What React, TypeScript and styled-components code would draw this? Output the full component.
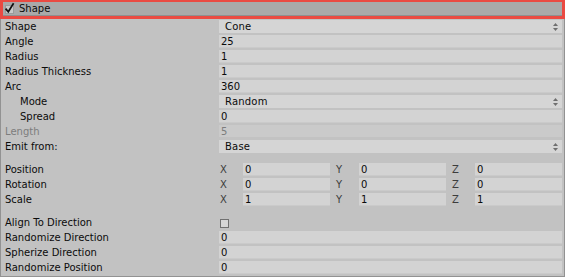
import React from "react";
import styled, { createGlobalStyle } from "styled-components";

const GlobalStyle = createGlobalStyle`
  html, body { margin: 0; padding: 0; background: #c2c2c2; }
  body { font-family: "DejaVu Sans", Verdana, sans-serif; font-size: 10px; color: #0b0b0b; }
  * { box-sizing: border-box; }
`;

const Panel = styled.div`
  width: 565px;
  height: 277px;
  display: flex;
  flex-direction: column;
  background: #c2c2c2;
`;

const Header = styled.div`
  height: 19px;
  border-style: solid;
  border-color: #ea4a42;
  border-width: 2px 3px 3px 3px;
  background: #a9a9a9;
  box-shadow: inset 0 -1px 0 #8f8f8f;
  display: flex;
  align-items: flex-start;
  padding-left: 1px;
  gap: 4px;
`;

const HeaderTitle = styled.span`
  line-height: 13px;
  color: #0a0a0a;
`;

const CheckIcon = styled.svg`
  width: 11px;
  height: 12px;
  flex: none;
  margin-top: 0px;
`;

const Body = styled.div`
  flex: 1;
  border-style: solid;
  border-color: #929292;
  border-width: 0 1px 1px 1px;
  padding: 1px 2px 0 4px;
  display: flex;
  flex-direction: column;
`;

const Row = styled.div`
  display: grid;
  grid-template-columns: 214px 1fr;
  height: 15px;
`;

const Spacer = styled.div`
  height: 8px;
`;

const Label = styled.div<{ $indent?: boolean; $disabled?: boolean }>`
  line-height: 13px;
  height: 13px;
  white-space: nowrap;
  padding-left: ${(p) => (p.$indent ? "15px" : "0")};
  color: ${(p) => (p.$disabled ? "#7d7d7d" : "#0b0b0b")};
`;

const Field = styled.div<{ $disabled?: boolean }>`
  height: 13px;
  line-height: 13px;
  padding-left: 2px;
  background: ${(p) => (p.$disabled ? "#cacaca" : "#d3d3d3")};
  color: ${(p) => (p.$disabled ? "#7d7d7d" : "#0b0b0b")};
  box-shadow: inset 0 -1px 0 rgba(0, 0, 0, 0.04);
  white-space: nowrap;
  overflow: hidden;
`;

const Popup = styled.div`
  height: 13px;
  line-height: 13px;
  padding: 0 4px 0 6px;
  background: #d5d5d5;
  display: flex;
  align-items: center;
  justify-content: space-between;
  letter-spacing: 0.2px;
`;

const PopupText = styled.span`
  line-height: 13px;
`;

const Arrows = styled.svg`
  width: 5px;
  height: 8px;
  flex: none;
`;

const VectorGroup = styled.div`
  display: grid;
  grid-template-columns: repeat(3, 1fr);
  column-gap: 5px;
  height: 13px;
`;

const Component = styled.div`
  display: grid;
  grid-template-columns: 24px 1fr;
`;

const AxisLabel = styled.span`
  line-height: 13px;
  padding-left: 1px;
  color: #3c3c3c;
`;

const CheckBox = styled.div`
  width: 9px;
  height: 9px;
  margin: 3px 0 0 1px;
  border: 1px solid #707070;
  background: #d6d6d6;
`;

const PopupField = ({ value }: { value: string }) => (
  <Popup>
    <PopupText>{value}</PopupText>
    <Arrows viewBox="0 0 5 8">
      <path d="M0 3 L2.5 0 L5 3 Z" fill="#6e6e6e" />
      <path d="M0 5 L2.5 8 L5 5 Z" fill="#6e6e6e" />
    </Arrows>
  </Popup>
);

const Vector = ({ values }: { values: string[] }) => (
  <VectorGroup>
    {["X", "Y", "Z"].map((axis, i) => (
      <Component key={axis}>
        <AxisLabel>{axis}</AxisLabel>
        <Field>{values[i]}</Field>
      </Component>
    ))}
  </VectorGroup>
);

export default function App() {
  return (
    <>
      <GlobalStyle />
      <Panel>
        <Header>
          <CheckIcon viewBox="0 0 11 12">
            <rect x="1.5" y="3.5" width="8" height="8" fill="#c9c9c9" stroke="#9a9a9a" />
            <path d="M1.6 6.6 L4.3 9.8 L9.6 1.2" fill="none" stroke="#111" strokeWidth="1.7" />
          </CheckIcon>
          <HeaderTitle>Shape</HeaderTitle>
        </Header>
        <Body>
          <Row>
            <Label>Shape</Label>
            <PopupField value="Cone" />
          </Row>
          <Row>
            <Label>Angle</Label>
            <Field>25</Field>
          </Row>
          <Row>
            <Label>Radius</Label>
            <Field>1</Field>
          </Row>
          <Row>
            <Label>Radius Thickness</Label>
            <Field>1</Field>
          </Row>
          <Row>
            <Label>Arc</Label>
            <Field>360</Field>
          </Row>
          <Row>
            <Label $indent>Mode</Label>
            <PopupField value="Random" />
          </Row>
          <Row>
            <Label $indent>Spread</Label>
            <Field>0</Field>
          </Row>
          <Row>
            <Label $disabled>Length</Label>
            <Field $disabled>5</Field>
          </Row>
          <Row>
            <Label>Emit from:</Label>
            <PopupField value="Base" />
          </Row>
          <Spacer />
          <Row>
            <Label>Position</Label>
            <Vector values={["0", "0", "0"]} />
          </Row>
          <Row>
            <Label>Rotation</Label>
            <Vector values={["0", "0", "0"]} />
          </Row>
          <Row>
            <Label>Scale</Label>
            <Vector values={["1", "1", "1"]} />
          </Row>
          <Spacer />
          <Row>
            <Label>Align To Direction</Label>
            <CheckBox />
          </Row>
          <Row>
            <Label>Randomize Direction</Label>
            <Field>0</Field>
          </Row>
          <Row>
            <Label>Spherize Direction</Label>
            <Field>0</Field>
          </Row>
          <Row>
            <Label>Randomize Position</Label>
            <Field>0</Field>
          </Row>
        </Body>
      </Panel>
    </>
  );
}
